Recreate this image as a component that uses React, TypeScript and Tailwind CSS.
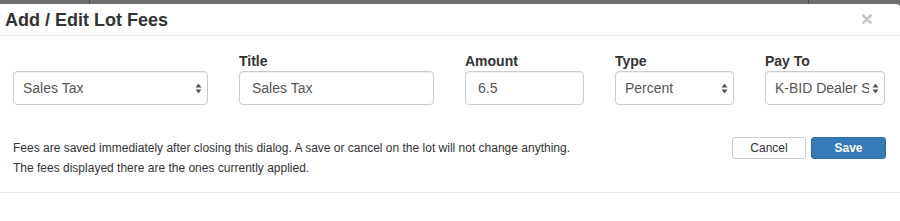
import { ReactNode } from "react";

const font = { fontFamily: '"Liberation Sans", Arial, sans-serif' };

function Arrows() {
  return (
    <svg width="7" height="11" viewBox="0 0 7 11" className="absolute right-[5px] top-[11px] pointer-events-none">
      <path d="M3.5 0.5 L6.5 4.5 L0.5 4.5 Z" fill="#555" />
      <path d="M3.5 10.5 L6.5 6.5 L0.5 6.5 Z" fill="#555" />
    </svg>
  );
}

function Field({ label, width, children }: { label?: string; width: string; children: ReactNode }) {
  return (
    <div className={`flex flex-col ${width}`}>
      <label className="h-[20px] leading-[20px] text-[14px] font-bold text-[#333]">{label ?? "\u00a0"}</label>
      {children}
    </div>
  );
}

function SelectBox({ value }: { value: string }) {
  return (
    <div className="relative flex h-[34px] w-full rounded-[4px] border border-[#ccc] bg-white pl-[9px] pr-[15px] shadow-[inset_0_1px_1px_rgba(0,0,0,0.075)]">
      <div className="flex-1 min-w-0 leading-[32px] text-[14px] text-[#555] whitespace-nowrap overflow-hidden">
        {value}
      </div>
      <Arrows />
    </div>
  );
}

function TextBox({ value }: { value: string }) {
  return (
    <input
      readOnly
      value={value}
      className="h-[34px] w-full rounded-[4px] border border-[#ccc] bg-white px-[12px] text-[14px] text-[#555] shadow-[inset_0_1px_1px_rgba(0,0,0,0.075)] outline-none"
      style={font}
    />
  );
}

export default function App() {
  return (
    <div className="w-[900px] h-[221px] bg-[#6e6e6e] overflow-hidden" style={font}>
      <div className="flex h-[4px]">
        <div className="w-[90px] border-r border-[#4f4f4f]" />
        <div className="w-[719px] border-r border-[#4f4f4f]" />
        <div className="flex-1" />
      </div>
      <div className="bg-white h-[217px] rounded-tr-[4px]">
        <div className="flex items-center justify-between h-[32px] border-b border-[#e5e5e5] pl-[5px] pr-[27px]">
          <h4 className="text-[18px] font-bold text-[#333] leading-[20px] pt-[1px]">Add / Edit Lot Fees</h4>
          <span className="text-[21px] font-bold text-[#c4c4c4] leading-none pb-[2px]">×</span>
        </div>
        <div className="flex gap-[31px] pl-[13px] pt-[15px]">
          <Field width="w-[195px]">
            <SelectBox value="Sales Tax" />
          </Field>
          <Field label="Title" width="w-[195px]">
            <TextBox value="Sales Tax" />
          </Field>
          <Field label="Amount" width="w-[119px]">
            <TextBox value="6.5" />
          </Field>
          <Field label="Type" width="w-[119px]">
            <SelectBox value="Percent" />
          </Field>
          <Field label="Pay To" width="w-[120px]">
            <SelectBox value="K-BID Dealer Services" />
          </Field>
        </div>
        <div className="flex justify-between items-start mt-[32px] pl-[13px] pr-[14px] pb-[14px] border-b border-[#e5e5e5]">
          <div className="text-[12px] leading-[20px] text-[#333] pt-[1px]">
            <p>Fees are saved immediately after closing this dialog. A save or cancel on the lot will not change anything.</p>
            <p>The fees displayed there are the ones currently applied.</p>
          </div>
          <div className="flex gap-[5px]">
            <button className="w-[74px] h-[22px] rounded-[3px] border border-[#ccc] bg-white text-[12px] text-[#333]" style={font}>
              Cancel
            </button>
            <button className="w-[75px] h-[22px] rounded-[3px] border border-[#2e6da4] bg-[#337ab7] text-[12px] font-bold text-white" style={font}>
              Save
            </button>
          </div>
        </div>
      </div>
    </div>
  );
}
